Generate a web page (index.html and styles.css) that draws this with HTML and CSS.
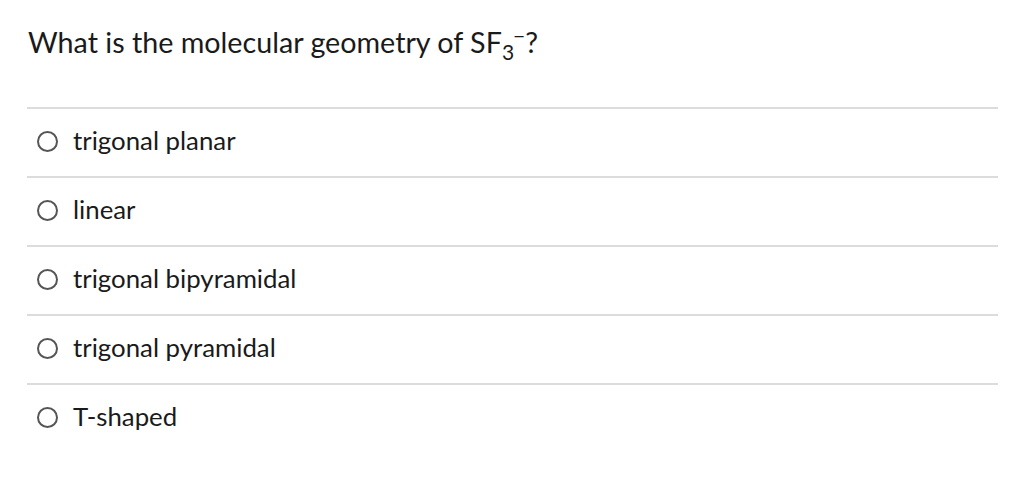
FILE: index.html
```html
<!DOCTYPE html>
<html>
<head>
<meta charset="utf-8">
<link rel="stylesheet" href="styles.css">
</head>
<body>
<div class="quiz">
  <div class="question">What is the molecular geometry of SF<sub>3</sub><sup>−</sup>?</div>
  <ul class="options">
    <li class="option"><span class="radio"></span><span class="label">trigonal planar</span></li>
    <li class="option"><span class="radio"></span><span class="label">linear</span></li>
    <li class="option"><span class="radio"></span><span class="label">trigonal bipyramidal</span></li>
    <li class="option"><span class="radio"></span><span class="label">trigonal pyramidal</span></li>
    <li class="option"><span class="radio"></span><span class="label">T-shaped</span></li>
  </ul>
</div>
</body>
</html>
```
FILE: styles.css
```css
html, body {
  margin: 0;
  padding: 0;
  background: #ffffff;
}
body {
  font-family: Lato, "Open Sans", sans-serif;
  color: #1a1a1a;
}
.quiz {
  width: 971px;
  padding-left: 27px;
  padding-top: 22px;
}
.question {
  font-size: 28.7px;
  line-height: 40px;
  height: 85px;
  padding-left: 1px;
}
.question sub {
  font-size: 21px;
  vertical-align: -7px;
  line-height: 0;
}
.question sup {
  font-size: 21px;
  vertical-align: 9px;
  line-height: 0;
  margin-left: -1px;
}
.options {
  list-style: none;
  margin: 0;
  padding: 0;
}
.option {
  display: flex;
  align-items: center;
  height: 67px;
  border-top: 2px solid #dcdcdc;
  padding-left: 10px;
}
.radio {
  width: 17px;
  height: 17px;
  border: 2px solid #555555;
  border-radius: 50%;
  flex: none;
  margin-top: -3px;
}
.label {
  font-size: 25.8px;
  margin-left: 15px;
  margin-top: -5px;
  color: #1a1a1a;
}
```
